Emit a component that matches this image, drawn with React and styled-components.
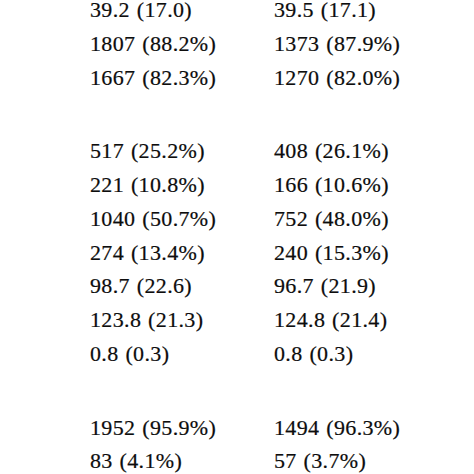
import React from 'react';
import styled, { createGlobalStyle } from "styled-components";

const sections = [
    [
        ["39.2 (17.0)", "39.5 (17.1)"],
        ["1807 (88.2%)", "1373 (87.9%)"],
        ["1667 (82.3%)", "1270 (82.0%)"],
    ],
    [
        ["517 (25.2%)", "408 (26.1%)"],
        ["221 (10.8%)", "166 (10.6%)"],
        ["1040 (50.7%)", "752 (48.0%)"],
        ["274 (13.4%)", "240 (15.3%)"],
        ["98.7 (22.6)", "96.7 (21.9)"],
        ["123.8 (21.3)", "124.8 (21.4)"],
        ["0.8 (0.3)", "0.8 (0.3)"],
    ],
    [
        ["1952 (95.9%)", "1494 (96.3%)"],
        ["83 (4.1%)", "57 (3.7%)"],
    ],
];

function App() {
    return (
        <>
            <GlobalStyle />
            <Table>
                {sections.map((rows, s) => (
                    <Section key={s}>
                        {rows.map((row, r) => (
                            <Row key={r}>
                                <Cell>{row[0]}</Cell>
                                <Cell>{row[1]}</Cell>
                            </Row>
                        ))}
                    </Section>
                ))}
            </Table>
        </>
    );
}

const GlobalStyle = createGlobalStyle`
    html, body {
        margin: 0;
        padding: 0;
        background: #ffffff;
        overflow: hidden;
    }
`;

const Table = styled.div`
    display: flex;
    flex-direction: column;
    gap: 40px;
    margin-top: -7px;
    padding-left: 90px;
    font-family: "Liberation Serif", Tinos, "DejaVu Serif", serif;
    font-size: 22px;
    line-height: 33.75px;
    color: #0d0d0d;
`;

const Section = styled.div`
    display: flex;
    flex-direction: column;
`;

const Row = styled.div`
    display: grid;
    grid-template-columns: 184px 184px;
`;

const Cell = styled.div`
    white-space: pre;
    letter-spacing: 0.35px;
    word-spacing: 1px;
    -webkit-text-stroke: 0.2px #0d0d0d;
`;

export default App;
